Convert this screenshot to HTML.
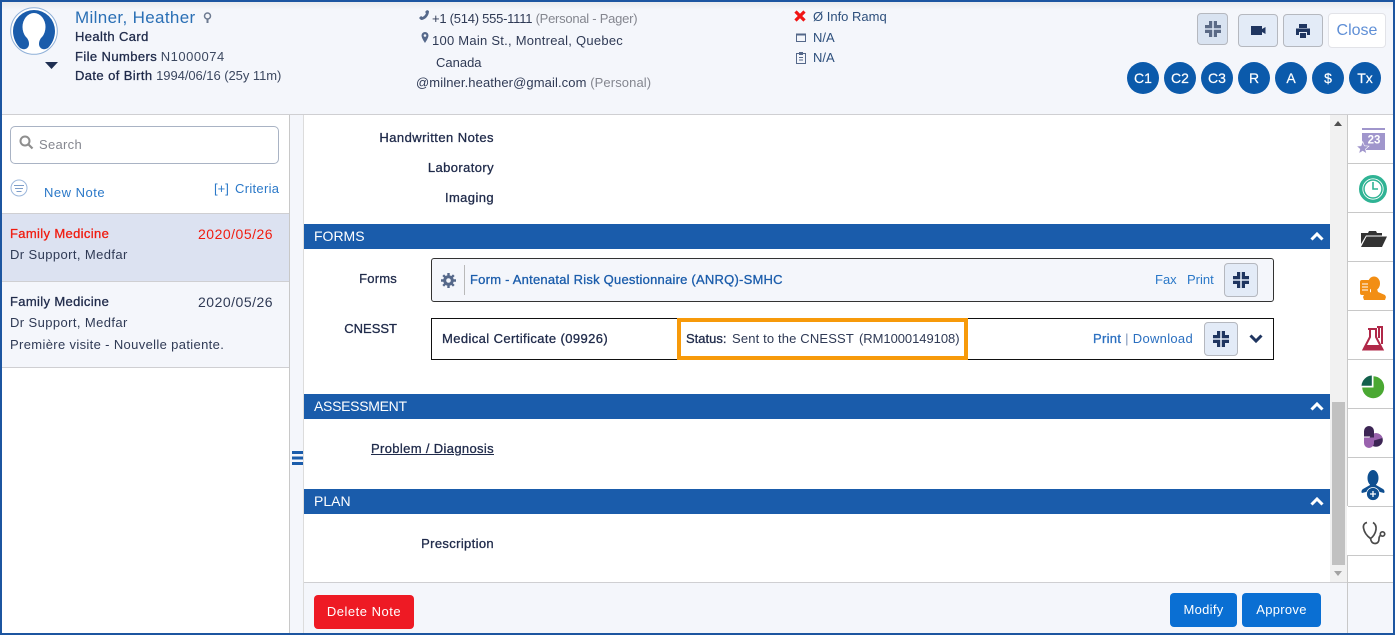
<!DOCTYPE html>
<html><head><meta charset="utf-8">
<style>
*{box-sizing:border-box}
html,body{margin:0;padding:0}
body{width:1395px;height:635px;position:relative;overflow:hidden;background:#fff;font-family:"Liberation Sans",sans-serif;font-size:13px;color:#2f3a55}
.a{position:absolute}
.t{position:absolute;white-space:nowrap;line-height:16px;font-size:13px;color:#2f3a55}
.b{color:#1f2a4a;-webkit-text-stroke:.3px #1f2a4a;letter-spacing:.4px}
.g{color:#84868f}
.l{color:#2a78c8}
.bar{position:absolute;left:304px;width:1026px;height:25px;background:#1a5cab;color:#fff;font-size:14px;line-height:25px;padding-left:10px}
.ch{position:absolute;right:6px;top:8px}
.c{position:absolute;top:62px;width:32px;height:32px;border-radius:50%;background:#0b5aab;color:#fff;font-size:14px;line-height:32px;text-align:center;-webkit-text-stroke:.2px #fff}
.ib{position:absolute;background:#e3ebf7;border:1px solid #b5b8bf;border-radius:4px}
.rl{position:absolute;left:1348px;width:45px;height:1px;background:#c8c8c8}
</style></head>
<body>
<svg width="0" height="0" style="position:absolute"><defs>
<symbol id="cp" viewBox="0 0 16 16"><path d="M4 0h3.200v7.200H0V4h4zM8.800 0H12v4h4v3.200H8.800zM0 8.800h7.200V16H4v-4H0zM8.800 8.800H16V12h-4v4H8.800z" fill="currentColor"/></symbol>
</defs></svg>

<!-- header -->
<div class="a" style="left:0;top:0;width:1395px;height:115px;background:#f4f6fb;border-bottom:1px solid #cfcfd2"></div>
<div class="a" style="left:0;top:2px;width:1395px;height:8px;background:linear-gradient(#e9eaec,#f4f6fb)"></div>

<svg class="a" style="left:10px;top:7px" width="48" height="48" viewBox="0 0 48 48">
<circle cx="24" cy="24" r="23.300" fill="#fff" stroke="#8fb0d8" stroke-width="1"/>
<path d="M3 24A21 21 0 0 1 45 24C45 31 42 37 38 41C33 44 29 41 29 37C29 33 31 32 31 30H17C17 32 19 33 19 37C19 41 15 44 10 41C6 37 3 31 3 24z" fill="#1a5cab"/>
<ellipse cx="24" cy="20" rx="11.500" ry="14" fill="#fff"/>
</svg>
<svg class="a" style="left:44px;top:61px" width="15" height="9"><path d="M1 1h13L7.500 8z" fill="#1f2f52"/></svg>

<div class="t" style="left:75px;top:8px;font-size:17px;line-height:20px;color:#2a6fb5;letter-spacing:.35px">Milner, Heather</div>
<svg class="a" style="left:203px;top:12px" width="9" height="12" viewBox="0 0 9 12"><circle cx="4.500" cy="4" r="3" fill="none" stroke="#6d7a90" stroke-width="1.500"/><path d="M4.500 7v4" stroke="#6d7a90" stroke-width="2"/></svg>
<div class="t b" style="left:75px;top:29px">Health Card</div>
<div class="t" style="left:75px;top:49px"><span class="b">File Numbers</span> <span style="color:#3c4860;letter-spacing:.5px">N1000074</span></div>
<div class="t" style="left:75px;top:68px"><span class="b">Date of Birth</span> <span style="color:#3c4860;letter-spacing:-.05px">1994/06/16 (25y 11m)</span></div>

<svg class="a" style="left:419px;top:10px" width="10" height="10" viewBox="0 0 10 10"><path d="M8 0l2 1c0 5-4 9-8 9L0 8l2-2 1.500 1C5.500 6 6.500 4.500 7 3L6 2z" fill="#55688a"/></svg>
<div class="t" style="left:432px;top:11px;letter-spacing:-.25px">+1 (514) 555-1111 <span class="g">(Personal - Pager)</span></div>
<svg class="a" style="left:421px;top:32px" width="8" height="11" viewBox="0 0 8 11"><path d="M4 0a3.500 3.500 0 0 1 3.500 3.500C7.500 6 4 11 4 11S.5 6 .5 3.500A3.500 3.500 0 0 1 4 0z" fill="#55688a"/><circle cx="4" cy="3.500" r="1.300" fill="#f4f6fb"/></svg>
<div class="t" style="left:432px;top:33px;letter-spacing:.25px">100 Main St., Montreal, Quebec</div>
<div class="t" style="left:436px;top:55px">Canada</div>
<div class="t" style="left:416px;top:75px;letter-spacing:.1px">@milner.heather@gmail.com <span class="g">(Personal)</span></div>

<svg class="a" style="left:794px;top:10px" width="12" height="12" viewBox="0 0 12 12"><path d="M1.500 1.500l9 9M10.500 1.500l-9 9" stroke="#f01414" stroke-width="3.200"/></svg>
<div class="t" style="left:813px;top:9px;color:#2d4f7c">Ø Info Ramq</div>
<svg class="a" style="left:796px;top:32px" width="10" height="10" viewBox="0 0 10 10"><path d="M.5 2.500h9v7h-9z" fill="none" stroke="#55688a"/><path d="M0 1.500h10v2H0z" fill="#55688a"/></svg>
<div class="t" style="left:813px;top:30px;color:#2d4f7c">N/A</div>
<svg class="a" style="left:796px;top:52px" width="10" height="12" viewBox="0 0 10 12"><path d="M.5 1.500h9v10h-9z" fill="none" stroke="#55688a"/><path d="M3 0h4v3H3zM3 5h4v1H3zM3 7.500h4v1H3z" fill="#55688a"/></svg>
<div class="t" style="left:813px;top:50px;color:#2d4f7c">N/A</div>

<div class="ib" style="left:1197px;top:13px;width:31px;height:32px;background:#d9e3f1"><svg class="a" style="left:7px;top:7px;color:#5b6a86" width="16" height="16"><use href="#cp"/></svg></div>
<div class="ib" style="left:1238px;top:14px;width:40px;height:33px"><svg class="a" style="left:12px;top:11px" width="15" height="9" viewBox="0 0 15 9"><path d="M0 0h11v9H0zM11 3l3.500-2v7L11 6z" fill="#1f3560"/></svg></div>
<div class="ib" style="left:1283px;top:14px;width:40px;height:33px"><svg class="a" style="left:12px;top:9px" width="14" height="14" viewBox="0 0 14 14"><path d="M3 0h8v4H3zM0 4.500h14V11h-3V8H3v3H0zM4 9h6v5H4z" fill="#1f3560"/></svg></div>
<div class="a" style="left:1328px;top:13px;width:58px;height:35px;background:#fff;border:1px solid #e2e3e8;border-radius:4px;color:#5f8fd6;font-size:16px;line-height:33px;text-align:center">Close</div>

<div class="c" style="left:1127px">C1</div>
<div class="c" style="left:1164px">C2</div>
<div class="c" style="left:1201px">C3</div>
<div class="c" style="left:1238px">R</div>
<div class="c" style="left:1275px">A</div>
<div class="c" style="left:1312px">$</div>
<div class="c" style="left:1349px">Tx</div>

<!-- left panel -->
<div class="a" style="left:289px;top:115px;width:1px;height:520px;background:#c8c8c8"></div>
<div class="a" style="left:290px;top:115px;width:14px;height:520px;background:#f4f6fb;border-right:1px solid #dcdcdc"></div>
<div class="a" style="left:10px;top:126px;width:269px;height:38px;border:1px solid #a9b3c4;border-radius:5px;background:#fff"></div>
<svg class="a" style="left:19px;top:135px" width="15" height="15" viewBox="0 0 15 15"><circle cx="6" cy="6" r="4.500" fill="none" stroke="#8e8e8e" stroke-width="2"/><path d="M9.500 9.500l4 4" stroke="#8e8e8e" stroke-width="2.200"/></svg>
<div class="t g" style="left:39px;top:137px;letter-spacing:.3px">Search</div>
<svg class="a" style="left:10px;top:179px" width="18" height="18" viewBox="0 0 18 18"><circle cx="9" cy="9" r="8" fill="none" stroke="#9db8dc"/><path d="M4 6.500h10M5 9.500h8M6.500 12.500h5" stroke="#7d9dc8"/></svg>
<div class="t l" style="left:44px;top:185px;letter-spacing:.5px">New Note</div>
<div class="t l" style="left:214px;top:181px">[+]</div>
<div class="t l" style="left:235px;top:181px;letter-spacing:.3px">Criteria</div>

<div class="a" style="left:2px;top:213px;width:287px;height:69px;background:#dce2f1;border-top:1px solid #cfcfd2;border-bottom:1px solid #cfcfd2"></div>
<div class="t" style="left:10px;top:226px;color:#f01c10;-webkit-text-stroke:.3px #f01c10;letter-spacing:.35px">Family Medicine</div>
<div class="t" style="left:198px;top:226px;color:#f01c10;font-size:14px;letter-spacing:.5px">2020/05/26</div>
<div class="t" style="left:10px;top:247px;letter-spacing:.4px">Dr Support, Medfar</div>
<div class="a" style="left:2px;top:282px;width:287px;height:86px;background:#f4f6fb;border-bottom:1px solid #cfcfd2"></div>
<div class="t b" style="left:10px;top:294px;letter-spacing:.35px">Family Medicine</div>
<div class="t" style="left:198px;top:294px;font-size:14px;letter-spacing:.5px">2020/05/26</div>
<div class="t" style="left:10px;top:315px;letter-spacing:.4px">Dr Support, Medfar</div>
<div class="t" style="left:10px;top:337px;letter-spacing:.35px">Première visite - Nouvelle patiente.</div>

<svg class="a" style="left:292px;top:451px" width="11" height="14"><path d="M0 0h11v3H0zM0 5.500h11v3H0zM0 11h11v3H0z" fill="#1a5cab"/></svg>

<!-- main -->
<div class="t b" style="left:294px;top:130px;width:200px;text-align:right;letter-spacing:.45px">Handwritten Notes</div>
<div class="t b" style="left:294px;top:160px;width:200px;text-align:right">Laboratory</div>
<div class="t b" style="left:294px;top:190px;width:200px;text-align:right">Imaging</div>

<div class="bar" style="top:224px">FORMS<svg class="ch" width="14" height="9" viewBox="0 0 14 9"><path d="M1.500 7.500L7 2l5.500 5.500" fill="none" stroke="#fff" stroke-width="3"/></svg></div>
<div class="t b" style="left:297px;top:271px;width:100px;text-align:right;letter-spacing:.2px">Forms</div>
<div class="a" style="left:431px;top:258px;width:843px;height:44px;background:#f4f6fb;border:1px solid #333;border-radius:3px"></div>
<svg class="a" style="left:441px;top:273px" width="15" height="15" viewBox="0 0 15 15"><circle cx="7.500" cy="7.500" r="3.800" fill="none" stroke="#55688a" stroke-width="3"/><path d="M7.500 0v3M7.500 12v3M0 7.500h3M12 7.500h3M2.200 2.200l2 2M10.800 10.800l2 2M12.800 2.200l-2 2M4.200 10.800l-2 2" stroke="#55688a" stroke-width="2.400"/></svg>
<div class="a" style="left:464px;top:265px;width:1px;height:30px;background:#b9b9b9"></div>
<div class="t" style="left:470px;top:272px;color:#1a5cab;-webkit-text-stroke:.3px #1a5cab;letter-spacing:.23px">Form - Antenatal Risk Questionnaire (ANRQ)-SMHC</div>
<div class="t l" style="left:1155px;top:272px">Fax</div>
<div class="t l" style="left:1187px;top:272px">Print</div>
<div class="ib" style="left:1224px;top:263px;width:34px;height:34px"><svg class="a" style="left:8px;top:8px;color:#1f3560" width="16" height="16"><use href="#cp"/></svg></div>

<div class="t b" style="left:297px;top:321px;width:100px;text-align:right;letter-spacing:0">CNESST</div>
<div class="a" style="left:431px;top:318px;width:843px;height:42px;background:#fff;border:1px solid #111"></div>
<div class="t b" style="left:442px;top:331px">Medical Certificate (09926)</div>
<div class="a" style="left:677px;top:318px;width:291px;height:42px;border:4px solid #f79a0a;background:#fff"></div>
<div class="t b" style="left:686px;top:331px;letter-spacing:0">Status:</div>
<div class="t" style="left:732px;top:331px;letter-spacing:.15px">Sent to the CNESST</div>
<div class="t" style="left:859px;top:331px;letter-spacing:-.05px">(RM1000149108)</div>
<div class="t" style="left:1093px;top:331px;color:#2a6fc0;letter-spacing:.3px"><span style="-webkit-text-stroke:.3px #2a6fc0">Print</span> <span style="color:#7c93b8">|</span> Download</div>
<div class="ib" style="left:1204px;top:322px;width:34px;height:34px"><svg class="a" style="left:8px;top:8px;color:#1f3560" width="16" height="16"><use href="#cp"/></svg></div>
<svg class="a" style="left:1249px;top:334px" width="14" height="9" viewBox="0 0 14 9"><path d="M1.500 1.500L7 7l5.500-5.500" fill="none" stroke="#1f3560" stroke-width="3"/></svg>

<div class="bar" style="top:394px;letter-spacing:-.3px">ASSESSMENT<svg class="ch" width="14" height="9" viewBox="0 0 14 9"><path d="M1.500 7.500L7 2l5.500 5.500" fill="none" stroke="#fff" stroke-width="3"/></svg></div>
<div class="t b" style="left:294px;top:441px;width:200px;text-align:right;text-decoration:underline;letter-spacing:.35px">Problem / Diagnosis</div>

<div class="bar" style="top:489px">PLAN<svg class="ch" width="14" height="9" viewBox="0 0 14 9"><path d="M1.500 7.500L7 2l5.500 5.500" fill="none" stroke="#fff" stroke-width="3"/></svg></div>
<div class="t b" style="left:294px;top:536px;width:200px;text-align:right;letter-spacing:.35px">Prescription</div>

<!-- footer -->
<div class="a" style="left:304px;top:582px;width:1043px;height:53px;background:#f4f6fb;border-top:1px solid #cfcfd2"></div>
<div class="a" style="left:314px;top:595px;width:100px;height:34px;background:#ee1a24;border-radius:4px;color:#fff;line-height:34px;text-align:center;letter-spacing:.5px">Delete Note</div>
<div class="a" style="left:1170px;top:593px;width:67px;height:34px;background:#0a6fd3;border-radius:4px;color:#fff;line-height:33px;text-align:center;letter-spacing:.3px">Modify</div>
<div class="a" style="left:1242px;top:593px;width:79px;height:34px;background:#0a6fd3;border-radius:4px;color:#fff;line-height:33px;text-align:center;letter-spacing:.3px">Approve</div>

<!-- scrollbar -->
<div class="a" style="left:1330px;top:115px;width:17px;height:467px;background:#f1f1f1"></div>
<div class="a" style="left:1332px;top:402px;width:13px;height:163px;background:#c1c1c1"></div>
<svg class="a" style="left:1334px;top:121px" width="9" height="6"><path d="M0 5h8L4 0z" fill="#505050"/></svg>
<svg class="a" style="left:1334px;top:571px" width="9" height="6"><path d="M0 0h8L4 5z" fill="#a3a3a3"/></svg>

<!-- right rail -->
<div class="a" style="left:1347px;top:115px;width:1px;height:391px;background:#c8c8c8"></div>
<div class="a" style="left:1347px;top:555px;width:1px;height:80px;background:#c8c8c8"></div>
<div class="a" style="left:1348px;top:582px;width:45px;height:51px;background:#f4f6fb"></div>
<div class="rl" style="top:163px"></div><div class="rl" style="top:212px"></div><div class="rl" style="top:261px"></div><div class="rl" style="top:310px"></div><div class="rl" style="top:359px"></div><div class="rl" style="top:408px"></div><div class="rl" style="top:457px"></div><div class="rl" style="top:506px"></div><div class="rl" style="top:555px"></div><div class="rl" style="top:582px"></div>

<svg class="a" style="left:1356px;top:127px" width="30" height="28" viewBox="0 0 30 28">
<path d="M6 1h23v2H6zM6 6h23v17H6z" fill="#a096cc"/>
<path d="M6.700 14.500l1.700 4.300 4.600.3-3.500 3 1.100 4.500-3.900-2.500-3.900 2.500 1.100-4.500-3.500-3 4.600-.3z" fill="#a096cc" stroke="#fff" stroke-width=".6"/>
<text x="18" y="16.500" font-family="Liberation Sans" font-size="11.500" font-weight="bold" fill="#fff" text-anchor="middle">23</text>
</svg>
<svg class="a" style="left:1359px;top:175px" width="28" height="28" viewBox="0 0 28 28"><circle cx="14" cy="14" r="12.300" fill="none" stroke="#2fb394" stroke-width="3.400"/><circle cx="14" cy="14" r="9" fill="none" stroke="#2fb394" stroke-width="1.500"/><path d="M14 7v7h5" fill="none" stroke="#2fb394" stroke-width="1.600"/></svg>
<svg class="a" style="left:1360px;top:230px" width="27" height="18" viewBox="0 0 27 18"><path d="M1 3h7l1-2h7l1 2h5v2.500H6L1 14z" fill="#333"/><path d="M6.500 6.500H27L22 17H1z" fill="#333"/></svg>
<svg class="a" style="left:1359px;top:276px" width="28" height="25" viewBox="0 0 28 25"><rect x="1" y="4" width="10" height="15" rx="2" fill="#f28e14"/><path d="M3 8h6M3 11h6M3 14h6" stroke="#fff" stroke-width="1"/><ellipse cx="15" cy="7.500" rx="6" ry="7" fill="#f28e14"/><path d="M12 13h6l1 3 7 3 1 2-1 3H5l-1-3 1-2 7-3z" fill="#f28e14"/></svg>
<svg class="a" style="left:1362px;top:325px" width="24" height="27" viewBox="0 0 24 27"><path d="M8 4v8L1.500 24.500h19L14 12V4" fill="none" stroke="#b02848" stroke-width="2"/><path d="M6 3h9v2H6z" fill="#b02848"/><path d="M4 20h14l2.500 5H1.500z" fill="#b02848"/><path d="M15 1h6v2h-6zM19 3h2v16h-2zM16 3h2v10h-2z" fill="#b02848"/></svg>
<svg class="a" style="left:1361px;top:375px" width="24" height="24" viewBox="0 0 24 24"><path d="M12.500 1.200A11 11 0 1 1 1.200 12.500H12.500z" fill="#4aa832"/><path d="M10.800 .5v10.300H.5A11 11 0 0 1 10.800 .5z" fill="#12604c"/></svg>
<svg class="a" style="left:1363px;top:425px" width="22" height="24" viewBox="0 0 22 24"><circle cx="13" cy="15" r="6.800" fill="#3c2554"/><path d="M11 8.500a6.800 6.800 0 0 1 8.500 4.500L11 15.500z" fill="#9a62ae"/><path d="M1 11.500V6a5 5 0 0 1 10 0v5.500z" fill="#3c2554"/><path d="M1 12.500h10V18a5 5 0 0 1-10 0z" fill="#9a62ae"/></svg>
<svg class="a" style="left:1361px;top:470px" width="24" height="31" viewBox="0 0 24 31"><ellipse cx="12" cy="8" rx="5.500" ry="8" fill="#0f4f90"/><path d="M9 13h6v2l7 4c1.500 1 2 3 1 4l-4-1H5l-4 1c-1-1-.5-3 1-4l7-4z" fill="#0f4f90"/><circle cx="12" cy="24" r="6.500" fill="#0f4f90" stroke="#fff" stroke-width=".8"/><path d="M9 24h6M12 21v6" stroke="#fff" stroke-width="1.300"/></svg>
<svg class="a" style="left:1362px;top:521px" width="24" height="24" viewBox="0 0 24 24"><path d="M5 1.500C2.500 2 1 4 1.500 7c.7 4 3.500 8 7 10.500 2.500-1.500 5-5 5.500-9 .4-3-.5-5.500-3-7M8.500 17.500c.5 3 2 5 4.500 5 3 0 4-2.500 4-4.500s1-3.500 2-4" fill="none" stroke="#4a4a4a" stroke-width="1.700"/><circle cx="20.500" cy="13" r="2.200" fill="none" stroke="#4a4a4a" stroke-width="1.700"/></svg>

<!-- outer frame -->
<div class="a" style="left:0;top:0;width:1395px;height:635px;border:2px solid #1c55a0;pointer-events:none"></div>
</body></html>
